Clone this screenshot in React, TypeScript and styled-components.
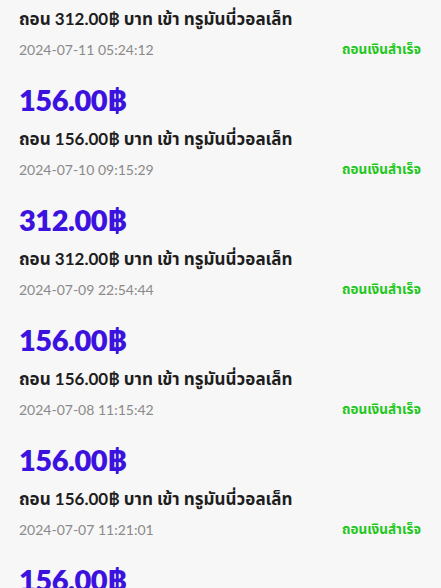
import React from 'react';
import { styled, createGlobalStyle } from 'styled-components';

type Withdrawal = {
    amount: string;
    title: string;
    date: string;
};

const GlobalStyle = createGlobalStyle`
    html, body {
        margin: 0;
        padding: 0;
        background: #f7f7f7;
        overflow: hidden;
    }
    body {
        font-family: Lato, "Noto Sans", "Noto Sans Thai", sans-serif;
    }
`;

const items: Withdrawal[] = [
    { amount: '312.00฿', title: 'ถอน 312.00฿ บาท เข้า ทรูมันนี่วอลเล็ท', date: '2024-07-11 05:24:12' },
    { amount: '156.00฿', title: 'ถอน 156.00฿ บาท เข้า ทรูมันนี่วอลเล็ท', date: '2024-07-10 09:15:29' },
    { amount: '312.00฿', title: 'ถอน 312.00฿ บาท เข้า ทรูมันนี่วอลเล็ท', date: '2024-07-09 22:54:44' },
    { amount: '156.00฿', title: 'ถอน 156.00฿ บาท เข้า ทรูมันนี่วอลเล็ท', date: '2024-07-08 11:15:42' },
    { amount: '156.00฿', title: 'ถอน 156.00฿ บาท เข้า ทรูมันนี่วอลเล็ท', date: '2024-07-07 11:21:01' },
    { amount: '156.00฿', title: 'ถอน 156.00฿ บาท เข้า ทรูมันนี่วอลเล็ท', date: '2024-07-06 10:02:18' },
];

export default function App() {
    return (
        <>
            <GlobalStyle />
            <List>
                {items.map((item, index) => (
                    <Item key={index}>
                        {/* the first card is scrolled up, its amount sits above the viewport */}
                        <Amount $hidden={index === 0}>{item.amount}</Amount>
                        <Title>{item.title}</Title>
                        <Meta>
                            <DateText>{item.date}</DateText>
                            <Status>ถอนเงินสำเร็จ</Status>
                        </Meta>
                    </Item>
                ))}
            </List>
        </>
    );
}

const List = styled.div`
    display: flex;
    flex-direction: column;
    padding: 0 20px 0 19px;
    margin-top: -40px;
`;

const Item = styled.div`
    display: flex;
    flex-direction: column;
    height: 120px;
`;

const Amount = styled.div<{ $hidden?: boolean }>`
    font-size: 29px;
    font-weight: 800;
    color: #3b12de;
    line-height: 40px;
    letter-spacing: -0.5px;
    visibility: ${({ $hidden }) => ($hidden ? 'hidden' : 'visible')};
`;

const Title = styled.div`
    margin-top: 2px;
    font-size: 17px;
    font-weight: 700;
    color: #1e1e1e;
    line-height: 34px;
`;

const Meta = styled.div`
    display: flex;
    justify-content: space-between;
    align-items: center;
    height: 27px;
`;

const DateText = styled.span`
    font-size: 14px;
    color: #8a8a8a;
`;

const Status = styled.span`
    font-size: 13.5px;
    font-weight: 700;
    color: #22c722;
`;
